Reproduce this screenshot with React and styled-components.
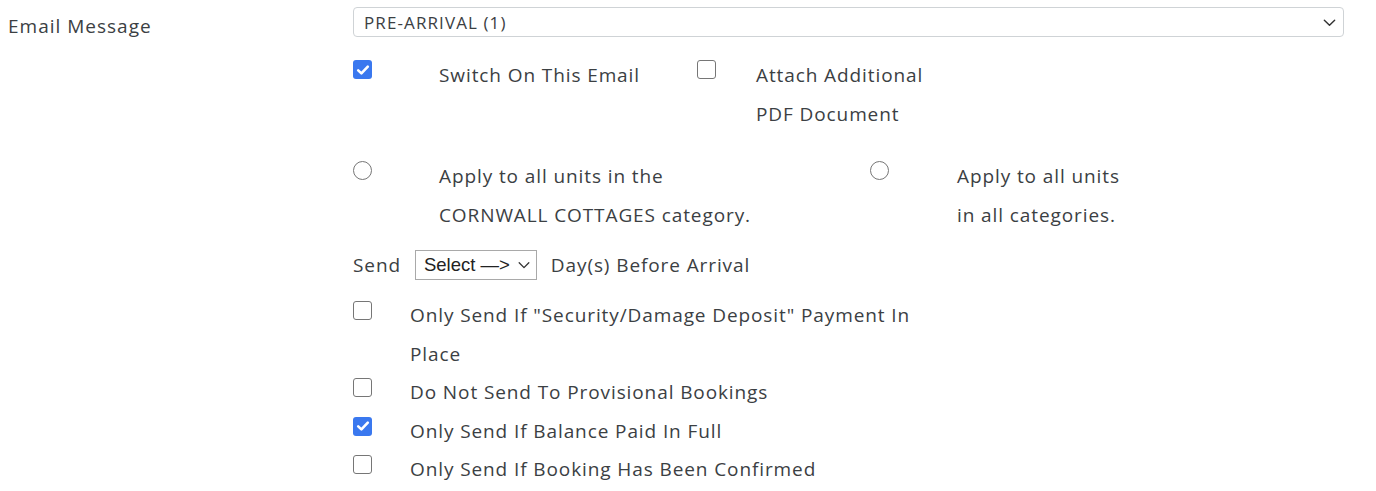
import styled, { createGlobalStyle } from 'styled-components';

const GlobalStyle = createGlobalStyle`
  body {
    margin: 0;
    background: #fff;
    font-family: "Open Sans", sans-serif;
    color: #3b4043;
  }
`;

const Page = styled.div`
  display: grid;
  grid-template-columns: 353px 991px;
  padding-top: 7px;
`;

const FieldLabel = styled.div`
  padding: 4px 0 0 8px;
  font-size: 19px;
  line-height: 30px;
  letter-spacing: 1px;
`;

const Column = styled.div`
  display: flex;
  flex-direction: column;
`;

const SelectBox = styled.div`
  display: flex;
  align-items: center;
  justify-content: space-between;
  box-sizing: border-box;
  height: 30px;
  padding: 0 6px 0 10px;
  border: 1px solid #cfd3d6;
  border-radius: 4px;
  font-size: 17px;
  letter-spacing: 1.1px;
  color: #3b4043;
`;

const PairRow = styled.div`
  display: grid;
  grid-template-columns: ${(p) => p.$cols};
  margin-top: ${(p) => p.$top || 0}px;
`;

const Text = styled.div`
  font-size: 19px;
  line-height: 38.5px;
  letter-spacing: 0.9px;
  max-width: ${(p) => p.$max || 'none'};
`;

const BoxCell = styled.div`
  padding-top: ${(p) => p.$pad ?? 4}px;
`;

const Check = styled.span`
  box-sizing: border-box;
  width: 19px;
  height: 19px;
  border-radius: 3px;
  border: ${(p) => (p.$on ? 'none' : '1.5px solid #767676')};
  background: ${(p) => (p.$on ? '#3a78ef' : '#fff')};
  display: flex;
  align-items: center;
  justify-content: center;
`;

const Radio = styled.span`
  display: block;
  box-sizing: border-box;
  width: 19px;
  height: 19px;
  border-radius: 50%;
  border: 1.5px solid #767676;
  background: #fff;
`;

const SendRow = styled.div`
  display: flex;
  align-items: center;
  gap: 14px;
  margin-top: 16px;
  height: 30px;
  font-size: 19px;
  letter-spacing: 0.9px;
`;

const SmallSelect = styled.div`
  display: flex;
  align-items: center;
  gap: 7px;
  box-sizing: border-box;
  height: 30px;
  padding: 0 5px 0 8px;
  border: 1px solid #a9a9a9;
  font-family: "Liberation Sans", Arial, sans-serif;
  font-size: 18.5px;
  letter-spacing: 0;
  color: #222;
`;

const OptionList = styled.div`
  display: flex;
  flex-direction: column;
  margin-top: 16px;
`;

const OptionRow = styled.div`
  display: grid;
  grid-template-columns: 57px 1fr;
`;

const Chevron = ({ size = 14 }) => (
  <svg width={size} height={size} viewBox="0 0 16 16" fill="none">
    <path d="M2.5 5.5 8 11l5.5-5.5" stroke="#333" strokeWidth="1.5" strokeLinecap="round" strokeLinejoin="round" />
  </svg>
);

const CheckBox = ({ on }) => (
  <Check $on={on}>
    {on && (
      <svg width="14" height="14" viewBox="0 0 14 14" fill="none">
        <path d="M2.2 7.4 5.4 10.4 11.8 3.6" stroke="#fff" strokeWidth="2.6" strokeLinecap="round" strokeLinejoin="round" />
      </svg>
    )}
  </Check>
);

const options = [
  { label: 'Only Send If "Security/Damage Deposit" Payment In Place', on: false },
  { label: 'Do Not Send To Provisional Bookings', on: false },
  { label: 'Only Send If Balance Paid In Full', on: true },
  { label: 'Only Send If Booking Has Been Confirmed', on: false },
];

export default function App() {
  return (
    <>
      <GlobalStyle />
      <Page>
        <FieldLabel>Email Message</FieldLabel>
        <Column>
          <SelectBox>
            <span>PRE-ARRIVAL (1)</span>
            <Chevron size={15} />
          </SelectBox>

          <PairRow $cols="86px 258px 59px auto" $top={19}>
            <BoxCell><CheckBox on /></BoxCell>
            <Text>Switch On This Email</Text>
            <BoxCell><CheckBox /></BoxCell>
            <Text $max="185px">Attach Additional PDF Document</Text>
          </PairRow>

          <PairRow $cols="86px 431px 87px auto" $top={24}>
            <BoxCell><Radio /></BoxCell>
            <Text $max="330px">Apply to all units in the CORNWALL COTTAGES category.</Text>
            <BoxCell><Radio /></BoxCell>
            <Text $max="172px">Apply to all units in all categories.</Text>
          </PairRow>

          <SendRow>
            <span>Send</span>
            <SmallSelect>
              <span>Select —&gt;</span>
              <Chevron size={14} />
            </SmallSelect>
            <span>Day(s) Before Arrival</span>
          </SendRow>

          <OptionList>
            {options.map((o) => (
              <OptionRow key={o.label}>
                <BoxCell $pad={5}><CheckBox on={o.on} /></BoxCell>
                <Text $max="520px">{o.label}</Text>
              </OptionRow>
            ))}
          </OptionList>
        </Column>
      </Page>
    </>
  );
}
